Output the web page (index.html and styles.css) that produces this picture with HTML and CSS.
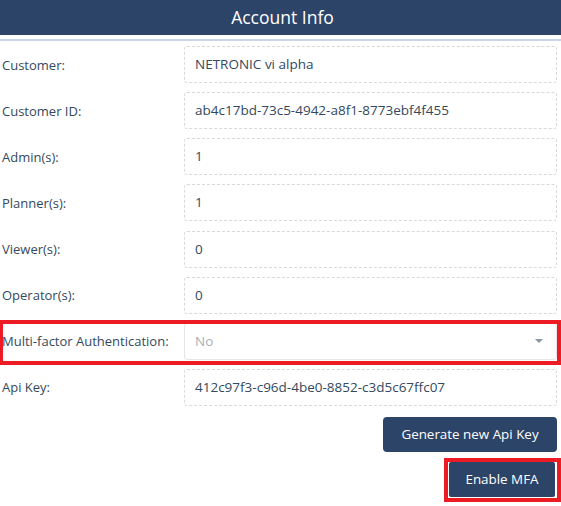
FILE: index.html
```html
<!DOCTYPE html>
<html>
<head>
<meta charset="utf-8">
<link rel="stylesheet" href="styles.css">
</head>
<body>
<div class="panel">
  <div class="header">Account Info</div>
  <div class="divider"></div>
  <div class="form">
    <div class="row"><label class="label">Customer:</label><div class="field">NETRONIC vi alpha</div></div>
    <div class="row"><label class="label">Customer ID:</label><div class="field">ab4c17bd-73c5-4942-a8f1-8773ebf4f455</div></div>
    <div class="row"><label class="label">Admin(s):</label><div class="field">1</div></div>
    <div class="row"><label class="label">Planner(s):</label><div class="field">1</div></div>
    <div class="row"><label class="label">Viewer(s):</label><div class="field">0</div></div>
    <div class="row"><label class="label">Operator(s):</label><div class="field">0</div></div>
    <div class="row highlight"><label class="label">Multi-factor Authentication:</label><div class="field select"><span class="placeholder">No</span><span class="caret"></span></div></div>
    <div class="row"><label class="label">Api Key:</label><div class="field">412c97f3-c96d-4be0-8852-c3d5c67ffc07</div></div>
  </div>
  <div class="actions">
    <button class="btn btn-generate">Generate new Api Key</button>
    <div class="btn-wrap highlight-btn"><button class="btn btn-mfa">Enable MFA</button></div>
  </div>
</div>
</body>
</html>
```

FILE: styles.css
```css
html, body {
  margin: 0;
  padding: 0;
  background: #ffffff;
}
body {
  font-family: "Open Sans", "Noto Sans", sans-serif;
  color: #34495e;
  width: 561px;
  height: 506px;
  overflow: hidden;
}
.header {
  height: 35px;
  background: #2d4469;
  color: #ffffff;
  font-size: 17.5px;
  line-height: 35px;
  text-align: center;
  padding-left: 4px;
}
.divider {
  margin-top: 4px;
  height: 2px;
  background: #cbd5e4;
}
.form {
  display: flex;
  flex-direction: column;
  gap: 9.15px;
  padding: 5px 4px 0 0;
}
.row {
  display: grid;
  grid-template-columns: 184px 1fr;
  align-items: center;
  height: 37px;
  position: relative;
}
.label {
  font-size: 13px;
  padding-left: 2px;
  color: #34495e;
  white-space: nowrap;
}
.field {
  height: 37px;
  box-sizing: border-box;
  border: 1px dashed #d9d9d9;
  border-radius: 3px;
  padding: 0 10px;
  font-size: 13.5px;
  line-height: 35px;
  color: #34495e;
  white-space: nowrap;
}
.field.select {
  border: 1px solid #e6e6e6;
  display: flex;
  align-items: center;
  justify-content: space-between;
  padding-right: 13px;
}
.placeholder {
  color: #a9afb8;
}
.caret {
  width: 0;
  height: 0;
  border-left: 4px solid transparent;
  border-right: 4px solid transparent;
  border-top: 4px solid #8a94a3;
}
.highlight::after {
  content: "";
  position: absolute;
  left: -1px;
  right: -4px;
  top: -3px;
  bottom: -5px;
  border: 4px solid #ed1c24;
  pointer-events: none;
}
.actions {
  display: flex;
  flex-direction: column;
  align-items: flex-end;
  padding: 11px 4px 0 0;
}
.btn {
  background: #2d4469;
  color: #ffffff;
  border: none;
  border-radius: 4px;
  font-family: "Open Sans", "Noto Sans", sans-serif;
  font-size: 13.4px;
  height: 35px;
  padding: 0;
  cursor: pointer;
}
.btn-generate {
  width: 174px;
}
.btn-wrap {
  margin-top: 6px;
  margin-right: -4px;
  border: 4px solid #ed1c24;
  padding: 0 2px 1px 1px;
  display: flex;
}
.btn-mfa {
  width: 106px;
  border-radius: 2px;
}
```
